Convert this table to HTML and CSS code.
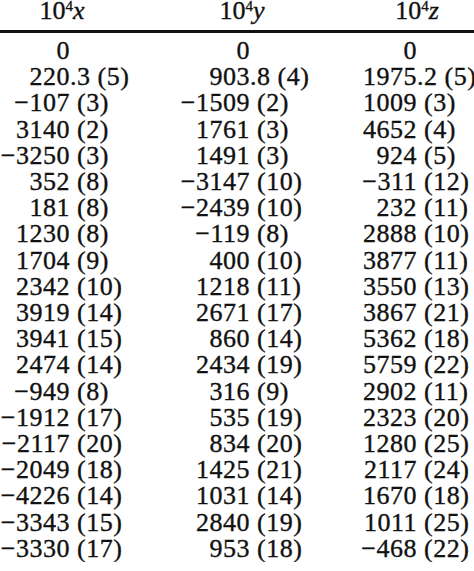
FILE: index.html
```html
<!DOCTYPE html>
<html>
<head>
<meta charset="utf-8">
<link rel="stylesheet" href="styles.css">
</head>
<body>
<div class="table">
  <div class="head">
    <div class="h">10<span class="sup">4</span><i>x</i></div>
    <div class="h">10<span class="sup">4</span><i>y</i></div>
    <div class="h">10<span class="sup">4</span><i>z</i></div>
  </div>
  <div class="rows">
    <div class="i">0</div><div class="r"></div><div class="i">0</div><div class="r"></div><div class="i">0</div><div class="r"></div>
    <div class="i">220</div><div class="r">.3 (5)</div><div class="i">903</div><div class="r">.8 (4)</div><div class="i">1975</div><div class="r">.2 (5)</div>
    <div class="i">−107</div><div class="r"> (3)</div><div class="i">−1509</div><div class="r"> (2)</div><div class="i">1009</div><div class="r"> (3)</div>
    <div class="i">3140</div><div class="r"> (2)</div><div class="i">1761</div><div class="r"> (3)</div><div class="i">4652</div><div class="r"> (4)</div>
    <div class="i">−3250</div><div class="r"> (3)</div><div class="i">1491</div><div class="r"> (3)</div><div class="i">924</div><div class="r"> (5)</div>
    <div class="i">352</div><div class="r"> (8)</div><div class="i">−3147</div><div class="r"> (10)</div><div class="i">−311</div><div class="r"> (12)</div>
    <div class="i">181</div><div class="r"> (8)</div><div class="i">−2439</div><div class="r"> (10)</div><div class="i">232</div><div class="r"> (11)</div>
    <div class="i">1230</div><div class="r"> (8)</div><div class="i">−119</div><div class="r"> (8)</div><div class="i">2888</div><div class="r"> (10)</div>
    <div class="i">1704</div><div class="r"> (9)</div><div class="i">400</div><div class="r"> (10)</div><div class="i">3877</div><div class="r"> (11)</div>
    <div class="i">2342</div><div class="r"> (10)</div><div class="i">1218</div><div class="r"> (11)</div><div class="i">3550</div><div class="r"> (13)</div>
    <div class="i">3919</div><div class="r"> (14)</div><div class="i">2671</div><div class="r"> (17)</div><div class="i">3867</div><div class="r"> (21)</div>
    <div class="i">3941</div><div class="r"> (15)</div><div class="i">860</div><div class="r"> (14)</div><div class="i">5362</div><div class="r"> (18)</div>
    <div class="i">2474</div><div class="r"> (14)</div><div class="i">2434</div><div class="r"> (19)</div><div class="i">5759</div><div class="r"> (22)</div>
    <div class="i">−949</div><div class="r"> (8)</div><div class="i">316</div><div class="r"> (9)</div><div class="i">2902</div><div class="r"> (11)</div>
    <div class="i">−1912</div><div class="r"> (17)</div><div class="i">535</div><div class="r"> (19)</div><div class="i">2323</div><div class="r"> (20)</div>
    <div class="i">−2117</div><div class="r"> (20)</div><div class="i">834</div><div class="r"> (20)</div><div class="i">1280</div><div class="r"> (25)</div>
    <div class="i">−2049</div><div class="r"> (18)</div><div class="i">1425</div><div class="r"> (21)</div><div class="i">2117</div><div class="r"> (24)</div>
    <div class="i">−4226</div><div class="r"> (14)</div><div class="i">1031</div><div class="r"> (14)</div><div class="i">1670</div><div class="r"> (18)</div>
    <div class="i">−3343</div><div class="r"> (15)</div><div class="i">2840</div><div class="r"> (19)</div><div class="i">1011</div><div class="r"> (25)</div>
    <div class="i">−3330</div><div class="r"> (17)</div><div class="i">953</div><div class="r"> (18)</div><div class="i">−468</div><div class="r"> (22)</div>
  </div>
</div>
</body>
</html>
```

FILE: styles.css
```css
html, body {
  margin: 0;
  padding: 0;
  background: #ffffff;
  overflow: hidden;
}
body {
  color: #111111;
  font-family: "Liberation Serif", "Times New Roman", serif;
  font-size: 26px;
  -webkit-text-stroke: 0.35px #111111;
}
.table {
  width: 474px;
}
.head {
  display: grid;
  grid-template-columns: 124px 236px 114px;
  height: 20px;
  line-height: 20px;
  padding-top: 1px;
  padding-bottom: 9px;
  border-bottom: 3px solid #111111;
}
.h {
  text-align: center;
  white-space: nowrap;
}
.sup {
  font-size: 15px;
  vertical-align: 8px;
  line-height: 0;
}
.rows {
  display: grid;
  grid-template-columns: 70px 100px 80px 87px 80px 57px;
  padding-top: 5px;
  line-height: 26.2px;
  letter-spacing: 0.5px;
}
.i {
  text-align: right;
  white-space: nowrap;
}
.r {
  text-align: left;
  white-space: pre;
}
```
